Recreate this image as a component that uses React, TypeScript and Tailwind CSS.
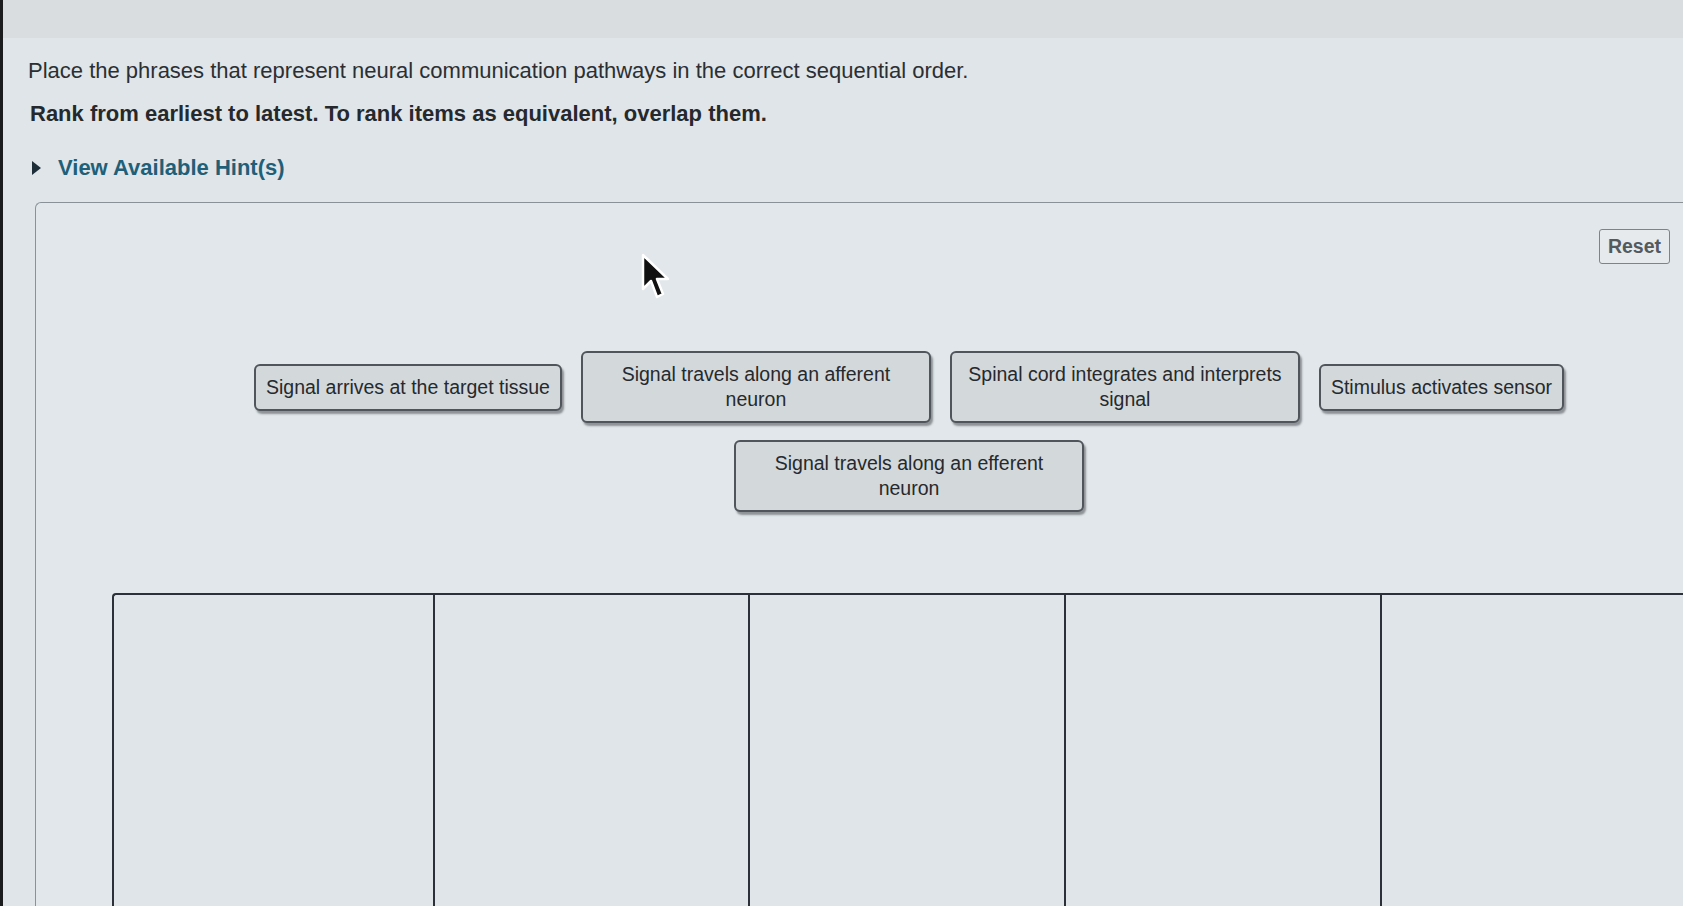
import React from "react";

const Card = ({ children }: { children: React.ReactNode }) => (
  <div className="max-w-[350px] px-[10px] py-[9px] text-center text-[19.5px] leading-[25px] text-[#26292d] bg-[#d3d8db] border-2 border-[#4f555b] rounded-[6px] shadow-[2px_3px_2px_rgba(40,45,50,0.45)]">
    {children}
  </div>
);

export default function App() {
  return (
    <div
      className="relative w-[1683px] h-[906px] overflow-hidden bg-[#dfe5e8] border-l-[3px] border-[#1a1c1e]"
      style={{ fontFamily: '"Liberation Sans", Arial, sans-serif' }}
    >
      <div className="h-[38px] bg-[#d9dddf]" />
      <div className="pl-[25px] pt-[18px]">
        <p className="text-[22px] leading-[30px] text-[#2b2f33]">
          Place the phrases that represent neural communication pathways in the correct sequential order.
        </p>
        <p className="mt-[13px] text-[22px] leading-[30px] font-bold text-[#25292d] pl-[2px]">
          Rank from earliest to latest. To rank items as equivalent, overlap them.
        </p>
        <div className="mt-[24px] flex items-center gap-[17px] pl-[4px]">
          <svg width="9" height="14" viewBox="0 0 9 14">
            <path d="M0 0 L9 7 L0 14 Z" fill="#1f2f3a" />
          </svg>
          <span className="text-[22px] leading-[30px] font-bold text-[#1f5f78]">View Available Hint(s)</span>
        </div>
      </div>

      <div className="ml-[32px] mt-[19px] h-[720px] border-t border-l border-[#8a9298] rounded-tl-[6px] bg-[#e1e7ea]">
        <div className="flex justify-end pr-[13px] pt-[26px]">
          <button className="px-[8px] h-[35px] text-[19.5px] font-bold text-[#54595e] bg-[#e6eaec] border border-[#7d8388] rounded-[3px]">
            Reset
          </button>
        </div>

        <div className="ml-[211px] mt-[87px] w-[1324px] flex flex-wrap justify-center items-center gap-x-[19px] gap-y-[17px]">
          <Card>Signal arrives at the target tissue</Card>
          <Card>Signal travels along an afferent neuron</Card>
          <Card>Spinal cord integrates and interprets signal</Card>
          <Card>Stimulus activates sensor</Card>
          <Card>Signal travels along an efferent neuron</Card>
        </div>

        <div className="ml-[76px] mt-[81px] grid grid-cols-[321px_315px_316px_316px_316px] h-[320px] border-t-2 border-l-2 border-[#2c3038] rounded-tl-[4px] bg-[#dfe5e8]">
          <div className="border-r-2 border-[#2c3038]" />
          <div className="border-r-2 border-[#2c3038]" />
          <div className="border-r-2 border-[#2c3038]" />
          <div className="border-r-2 border-[#2c3038]" />
          <div />
        </div>
      </div>

      <svg className="absolute left-[638px] top-[253px]" width="30" height="48" viewBox="0 0 30 48">
        <path d="M2 2 L2 36 L10 28 L16 44 L22 41 L16 26 L27 26 Z" fill="#111" stroke="#fff" strokeWidth="2.5" strokeLinejoin="round" />
      </svg>
    </div>
  );
}
